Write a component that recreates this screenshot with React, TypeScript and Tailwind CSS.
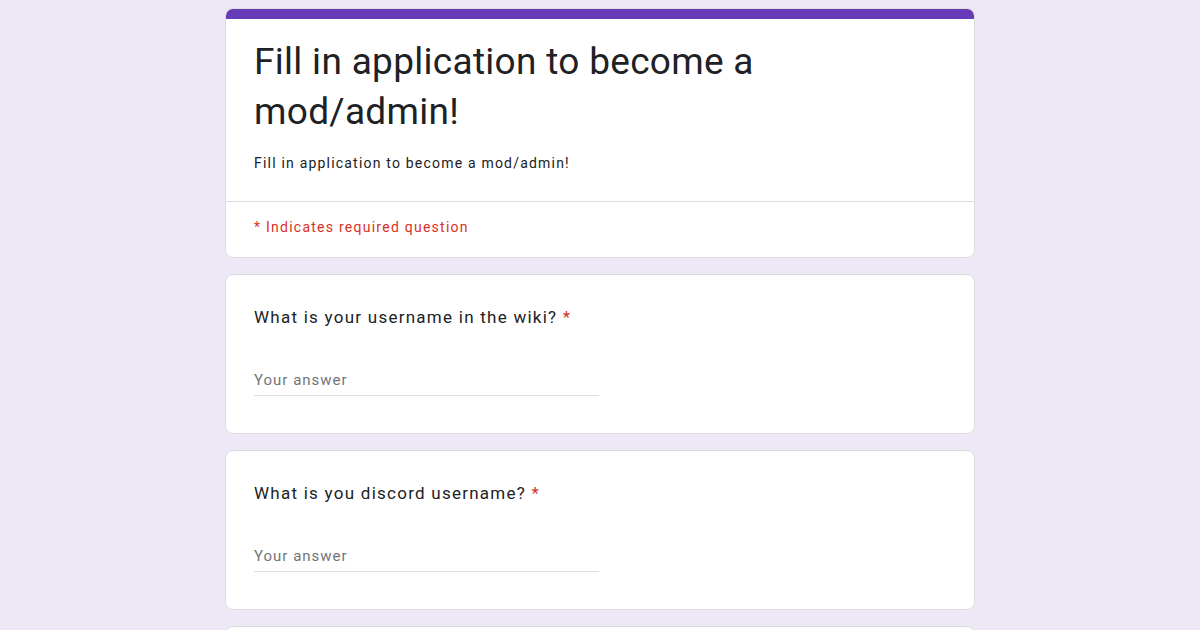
import React from 'react';

const QuestionCard: React.FC<{ question: string }> = ({ question }) => {
  return (
    <div className="bg-white rounded-lg border border-[#dadce0] px-[28px] pt-[30px] pb-[37px]">
      <div className="text-[17px] leading-[24px] text-[#202124] tracking-[1.25px]">
        {question} <span className="text-[#d93025]">*</span>
      </div>
      <div className="mt-[41px] w-[345px] border-b border-[#e0e0e0] pb-[4px] text-[15px] leading-[21px] tracking-[1px] text-[#70757a]">
        Your answer
      </div>
    </div>
  );
};

const App: React.FC = () => {
  return (
    <div
      className="h-screen overflow-hidden w-full bg-[#ede7f6] pt-[8px]"
      style={{ fontFamily: 'Roboto, "Open Sans", Arial, sans-serif' }}
    >
      <div className="mx-auto w-[750px] flex flex-col gap-[16px]">
        {/* header card */}
        <div className="bg-white rounded-lg border border-[#dadce0] overflow-hidden">
          <div className="h-[10px] bg-[#673ab7]" />
          <div className="px-[28px] pt-[18px] pb-[28px]">
            <h1 className="max-w-[560px] text-[37px] leading-[50px] tracking-[0.3px] text-[#202124] font-normal">
              Fill in application to become a mod/admin!
            </h1>
            <p className="mt-[16px] text-[14px] leading-[20px] tracking-[1.2px] text-[#202124]">
              Fill in application to become a mod/admin!
            </p>
          </div>
          <div className="border-t border-[#dadce0] px-[28px] pt-[15px] pb-[20px] text-[14px] leading-[20px] tracking-[1.25px] text-[#d93025]">
            * Indicates required question
          </div>
        </div>

        <QuestionCard question="What is your username in the wiki?" />
        <QuestionCard question="What is you discord username?" />
        {/* next card, only its top edge shows */}
        <div className="bg-white rounded-lg border border-[#dadce0] h-[160px]" />
      </div>
    </div>
  );
};

export default App;
